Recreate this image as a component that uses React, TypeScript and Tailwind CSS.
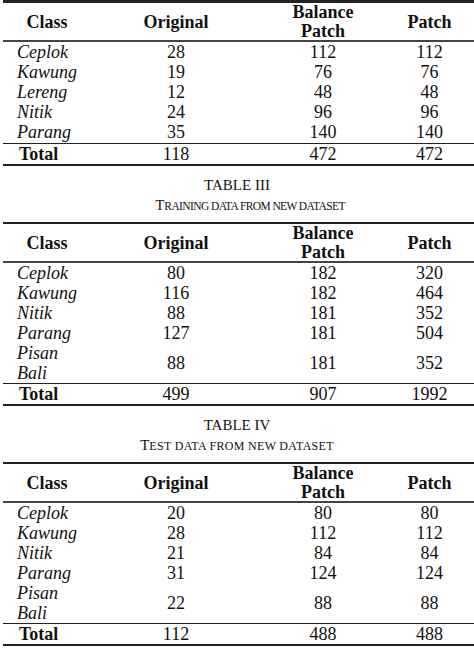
type Row = { name: string[]; values: string[] };

type TableData = {
  rows: Row[];
  total: string[];
};

const table2: TableData = {
  rows: [
    { name: ['Ceplok'], values: ['28', '112', '112'] },
    { name: ['Kawung'], values: ['19', '76', '76'] },
    { name: ['Lereng'], values: ['12', '48', '48'] },
    { name: ['Nitik'], values: ['24', '96', '96'] },
    { name: ['Parang'], values: ['35', '140', '140'] },
  ],
  total: ['118', '472', '472'],
};

const table3: TableData = {
  rows: [
    { name: ['Ceplok'], values: ['80', '182', '320'] },
    { name: ['Kawung'], values: ['116', '182', '464'] },
    { name: ['Nitik'], values: ['88', '181', '352'] },
    { name: ['Parang'], values: ['127', '181', '504'] },
    { name: ['Pisan', 'Bali'], values: ['88', '181', '352'] },
  ],
  total: ['499', '907', '1992'],
};

const table4: TableData = {
  rows: [
    { name: ['Ceplok'], values: ['20', '80', '80'] },
    { name: ['Kawung'], values: ['28', '112', '112'] },
    { name: ['Nitik'], values: ['21', '84', '84'] },
    { name: ['Parang'], values: ['31', '124', '124'] },
    { name: ['Pisan', 'Bali'], values: ['22', '88', '88'] },
  ],
  total: ['112', '488', '488'],
};

const cols = 'grid grid-cols-[88px_170px_124px_1fr]';

function DataTable({ data, first }: { data: TableData; first?: boolean }) {
  return (
    <div
      className={`ml-[3px] border-[#222] ${first ? 'border-t-[3px]' : 'border-t-2'} border-b-2`}
    >
      {/* header */}
      <div className={`${cols} h-[39px] items-center border-b-2 border-[#444] font-bold leading-[19px]`}>
        <div className="text-center">Class</div>
        <div className="text-center">Original</div>
        <div className="text-center">
          Balance
          <br />
          Patch
        </div>
        <div className="text-center">Patch</div>
      </div>

      {/* body */}
      <div className={first ? 'pb-[1px]' : ''}>
        {data.rows.map((row) => (
          <div key={row.name.join(' ')} className={`${cols} items-center leading-[20px]`}>
            <div className="pl-[14px] italic">
              {row.name.map((part) => (
                <div key={part}>{part}</div>
              ))}
            </div>
            {row.values.map((v, i) => (
              <div key={i} className="text-center">
                {v}
              </div>
            ))}
          </div>
        ))}
      </div>

      {/* total */}
      <div className={`${cols} items-center border-t border-[#222] leading-[20px]`}>
        <div className="pl-[16px] font-bold">Total</div>
        {data.total.map((v, i) => (
          <div key={i} className="text-center">
            {v}
          </div>
        ))}
      </div>
    </div>
  );
}

export default function App() {
  return (
    <div className="w-[474px] min-h-[667px] bg-white font-['Liberation_Serif',serif] text-[18px] text-[#111]">
      <DataTable data={table2} first />

      <div className="pt-[9px] pb-[6px] text-center leading-[20px]">
        <div className="text-[15px]">TABLE III</div>
        <div className="pl-[26px] text-[15px]">
          T<span className="text-[11.5px] tracking-[-0.6px]">RAINING DATA FROM NEW DATASET</span>
        </div>
      </div>

      <DataTable data={table3} />

      <div className="pt-[9px] pb-[6px] text-center leading-[20px]">
        <div className="text-[15px]">TABLE IV</div>
        <div className="text-[15px]">
          T<span className="text-[12px] tracking-[0.3px]">EST DATA FROM NEW DATASET</span>
        </div>
      </div>

      <DataTable data={table4} />
    </div>
  );
}
